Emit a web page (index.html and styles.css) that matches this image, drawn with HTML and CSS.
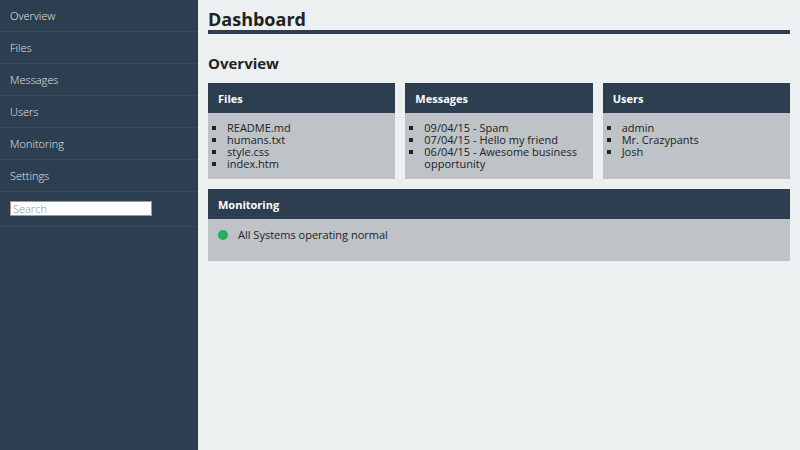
FILE: index.html
```html
<!DOCTYPE html>
<html>
<head>
<meta charset="utf-8">
<link rel="stylesheet" href="styles.css">
</head>
<body>
<nav class="sidebar">
  <a class="nav-item">Overview</a>
  <a class="nav-item">Files</a>
  <a class="nav-item">Messages</a>
  <a class="nav-item">Users</a>
  <a class="nav-item">Monitoring</a>
  <a class="nav-item">Settings</a>
  <div class="nav-search"><input type="text" placeholder="Search"></div>
</nav>
<main class="main">
  <h1 class="title">Dashboard</h1>
  <h2 class="subtitle">Overview</h2>
  <div class="row">
    <section class="card">
      <div class="card-head">Files</div>
      <div class="card-body">
        <ul>
          <li>README.md</li>
          <li>humans.txt</li>
          <li>style.css</li>
          <li>index.htm</li>
        </ul>
      </div>
    </section>
    <section class="card">
      <div class="card-head">Messages</div>
      <div class="card-body">
        <ul>
          <li>09/04/15 - Spam</li>
          <li>07/04/15 - Hello my friend</li>
          <li>06/04/15 - Awesome business opportunity</li>
        </ul>
      </div>
    </section>
    <section class="card">
      <div class="card-head">Users</div>
      <div class="card-body">
        <ul>
          <li>admin</li>
          <li>Mr. Crazypants</li>
          <li>Josh</li>
        </ul>
      </div>
    </section>
  </div>
  <section class="card wide">
    <div class="card-head">Monitoring</div>
    <div class="card-body status">
      <span class="dot"></span>
      <span>All Systems operating normal</span>
    </div>
  </section>
</main>
</body>
</html>
```
FILE: styles.css
```css
html, body {
  margin: 0;
  padding: 0;
  height: 100%;
}
body {
  display: flex;
  background: #ecf0f1;
  font-family: "Open Sans", "Noto Sans", sans-serif;
  color: #222;
}
.sidebar {
  width: 198px;
  flex: none;
  background: #2c3e50;
  display: flex;
  flex-direction: column;
}
.nav-item {
  display: block;
  height: 31px;
  line-height: 31px;
  padding-left: 10px;
  border-bottom: 1px solid #34495e;
  color: #e4e9ec;
  font-size: 11px;
  font-weight: 300;
}
.nav-search {
  padding: 9px 10px 10px;
  border-bottom: 1px solid #34495e;
}
.nav-search input {
  display: block;
  box-sizing: border-box;
  width: 142px;
  height: 15px;
  margin: 0;
  padding: 0 2px;
  border: 1px solid #999;
  background: #fff;
  font-family: inherit;
  font-size: 11px;
  font-weight: 300;
  line-height: 13px;
}
.nav-search input::placeholder {
  color: #8a8a8a;
}
.main {
  flex: 1;
  padding: 0 10px;
  min-width: 0;
}
.title {
  margin: 0;
  padding-top: 8px;
  font-size: 18px;
  line-height: 22px;
  font-weight: 700;
  color: #222;
  border-bottom: 4px solid #2c3e50;
}
.subtitle {
  margin: 0;
  padding-top: 19px;
  font-size: 15px;
  line-height: 20px;
  font-weight: 700;
  color: #222;
  height: 30px;
}
.row {
  display: flex;
  gap: 10px;
  margin-bottom: 10px;
}
.card {
  flex: 1;
  display: flex;
  flex-direction: column;
}
.card-head {
  background: #2c3e50;
  color: #fff;
  font-size: 11px;
  font-weight: 700;
  height: 30px;
  line-height: 31px;
  padding-left: 10px;
}
.card-body {
  flex: 1;
  background: #bdc3c7;
  padding: 9px 10px;
  font-size: 11px;
  line-height: 12px;
  color: #222;
}
.card-body ul {
  margin: 0;
  padding-left: 9px;
  list-style: square;
}
.status {
  display: flex;
  align-items: center;
  height: 22px;
  padding: 10px 10px 20px 10px;
}
.dot {
  width: 10px;
  height: 10px;
  border-radius: 50%;
  background: #27ae60;
  margin-right: 10px;
  flex: none;
}
```
